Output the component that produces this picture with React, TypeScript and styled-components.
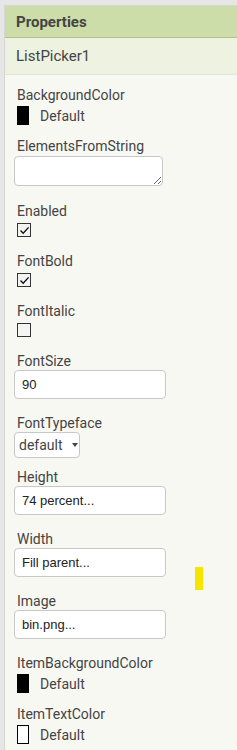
import React from "react";
import styled, { createGlobalStyle } from "styled-components";

const GlobalStyle = createGlobalStyle`
    html, body {
        margin: 0;
        padding: 0;
        background-color: #e6e6e6;
    }
    * {
        box-sizing: border-box;
    }
`;

type EditorKind = 'swatch' | 'check' | 'textarea' | 'input' | 'select';

interface IProperty {
    name: string;
    kind: EditorKind;
    value?: string;
    checked?: boolean;
    color?: string;
}

const properties: IProperty[] = [
    { name: 'BackgroundColor', kind: 'swatch', value: 'Default', color: '#000' },
    { name: 'ElementsFromString', kind: 'textarea' },
    { name: 'Enabled', kind: 'check', checked: true },
    { name: 'FontBold', kind: 'check', checked: true },
    { name: 'FontItalic', kind: 'check', checked: false },
    { name: 'FontSize', kind: 'input', value: '90' },
    { name: 'FontTypeface', kind: 'select', value: 'default' },
    { name: 'Height', kind: 'input', value: '74 percent...' },
    { name: 'Width', kind: 'input', value: 'Fill parent...' },
    { name: 'Image', kind: 'input', value: 'bin.png...' },
    { name: 'ItemBackgroundColor', kind: 'swatch', value: 'Default', color: '#000' },
    { name: 'ItemTextColor', kind: 'swatch', value: 'Default', color: '#fff' },
];

// 편집기 종류별 아래 여백
const blockGap: Record<EditorKind, number> = {
    swatch: 12,
    check: 15,
    textarea: 16,
    input: 15,
    select: 10,
};

const Editor = ({ prop }: { prop: IProperty }) => {
    switch (prop.kind) {
        case 'swatch':
            return (
                <SwatchRow>
                    <Swatch $color={prop.color ?? '#000'} />
                    <SwatchText>{prop.value}</SwatchText>
                </SwatchRow>
            );
        case 'check':
            return (
                <CheckBox>
                    {prop.checked && (
                        <svg width="11" height="11" viewBox="0 0 11 11">
                            <path d="M1.5 5.6 L4.2 8.3 L9.6 2.4" fill="none" stroke="#111" strokeWidth="1.4" />
                        </svg>
                    )}
                </CheckBox>
            );
        case 'textarea':
            return <TextArea defaultValue="" />;
        case 'select':
            return (
                <SelectBox>
                    <span>{prop.value}</span>
                    <Caret />
                </SelectBox>
            );
        default:
            return <TextInput type="text" defaultValue={prop.value} readOnly />;
    }
};

const App = () => {
    return (
        <>
            <GlobalStyle />
            <Page>
                <Panel>
                    <Header>Properties</Header>
                    <ComponentName>ListPicker1</ComponentName>
                    <Body>
                        {properties.map(prop => (
                            <PropertyBlock key={prop.name} $gap={blockGap[prop.kind]}>
                                <Label>{prop.name}</Label>
                                <Editor prop={prop} />
                            </PropertyBlock>
                        ))}
                        <Marker />
                    </Body>
                </Panel>
            </Page>
        </>
    );
}

const Page = styled.div`
    width: 237px;
    height: 750px;
    overflow: hidden;
    padding: 5px 0 0 4px;
    background-color: #e6e6e6;
`;
const Panel = styled.div`
    height: 100%;
    background-color: #f8f8f3;
    border-left: 1px solid #d6d6d2;
    border-top: 1px solid #d6d6d2;
`;
const Header = styled.div`
    display: flex;
    align-items: center;
    height: 32px;
    padding-left: 11px;
    color: #444;
    font-family: Roboto, "Liberation Sans", sans-serif;
    font-size: 15px;
    font-weight: 700;
    background-color: #ccdda9;
    border-bottom: 1px solid #b3c28f;
`;
const ComponentName = styled.div`
    display: flex;
    align-items: center;
    height: 37px;
    padding-left: 11px;
    color: #444;
    font-family: Roboto, "Liberation Sans", sans-serif;
    font-size: 15px;
    background-color: #eef2e0;
    border-bottom: 1px solid #dfe4cf;
`;
const Body = styled.div`
    position: relative;
    display: flex;
    flex-direction: column;
    padding: 11px 0 0 9px;
`;
const PropertyBlock = styled.div<{ $gap: number }>`
    display: flex;
    flex-direction: column;
    align-items: flex-start;
    margin-bottom: ${props => props.$gap}px;
`;
const Label = styled.div`
    margin-left: 3px;
    color: #444;
    font-family: Roboto, "Liberation Sans", sans-serif;
    font-size: 14px;
    line-height: 18px;
`;
const SwatchRow = styled.div`
    display: flex;
    align-items: center;
    gap: 11px;
    margin: 2px 0 0 3px;
`;
const Swatch = styled.span<{ $color: string }>`
    width: 12px;
    height: 19px;
    background-color: ${props => props.$color};
    border: 1px solid #000;
`;
const SwatchText = styled.span`
    color: #444;
    font-family: Roboto, "Liberation Sans", sans-serif;
    font-size: 14px;
`;
const CheckBox = styled.span`
    display: flex;
    align-items: center;
    justify-content: center;
    width: 14px;
    height: 14px;
    margin: 3px 0 0 3px;
    background-color: #f4f4f4;
    border: 1px solid #333;
`;
const fieldBase = `
    background-color: #fff;
    border: 1px solid #c8c8c8;
    border-radius: 4px;
    outline: none;
    color: #222;
    font-family: "Liberation Sans", Arial, sans-serif;
    font-size: 13px;
`;
const TextArea = styled.textarea`
    ${fieldBase}
    width: 149px;
    height: 30px;
    margin: 1px 0 0 0;
    resize: both;
`;
const TextInput = styled.input`
    ${fieldBase}
    width: 152px;
    height: 29px;
    padding: 0 0 0 7px;
`;
const SelectBox = styled.div`
    ${fieldBase}
    display: flex;
    align-items: center;
    gap: 9px;
    width: 66px;
    height: 26px;
    padding-left: 4px;
    color: #444;
    font-family: Roboto, "Liberation Sans", sans-serif;
    font-size: 14px;
`;
const Caret = styled.span`
    width: 0;
    height: 0;
    border-left: 3px solid transparent;
    border-right: 3px solid transparent;
    border-top: 4px solid #444;
`;
const Marker = styled.span`
    position: absolute;
    left: 190px;
    top: 492px;
    width: 8px;
    height: 23px;
    background-color: #f7e400;
`;

export default App;
